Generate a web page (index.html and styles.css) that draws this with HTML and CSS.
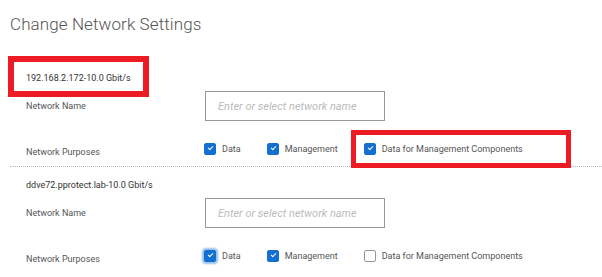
FILE: index.html
```html
<!DOCTYPE html>
<html>
<head>
<meta charset="utf-8">
<link rel="stylesheet" href="styles.css">
</head>
<body>
<div class="page">
  <h1 class="title">Change Network Settings</h1>

  <section class="net">
    <div class="net-head"><span class="net-id marked">192.168.2.172-10.0 Gbit/s</span></div>
    <div class="row row-name">
      <span class="label">Network Name</span>
      <input class="field" type="text" placeholder="Enter or select network name">
    </div>
    <div class="row row-purpose">
      <span class="label">Network Purposes</span>
      <div class="checks">
        <span class="check"><span class="box on"></span>Data</span>
        <span class="check"><span class="box on"></span>Management</span>
        <span class="check marked-item"><span class="box on"></span>Data for Management Components</span>
      </div>
    </div>
  </section>

  <div class="sep"></div>

  <section class="net">
    <div class="net-head"><span class="net-id">ddve72.pprotect.lab-10.0 Gbit/s</span></div>
    <div class="row row-name">
      <span class="label">Network Name</span>
      <input class="field" type="text" placeholder="Enter or select network name">
    </div>
    <div class="row row-purpose">
      <span class="label">Network Purposes</span>
      <div class="checks">
        <span class="check"><span class="box on focus"></span>Data</span>
        <span class="check"><span class="box on"></span>Management</span>
        <span class="check"><span class="box"></span>Data for Management Components</span>
      </div>
    </div>
  </section>
</div>
</body>
</html>
```

FILE: styles.css
```css
* { box-sizing: border-box; }
html, body { margin: 0; padding: 0; background: #fff; }
body { font-family: Roboto, "Liberation Sans", sans-serif; color: #444; }

.page { padding-top: 10px; }

.title {
  margin: 0 0 0 10px;
  font-size: 17px;
  font-weight: 300;
  color: #555;
  line-height: 28px;
  letter-spacing: 0.1px;
}

.net { padding-left: 26px; }

.net-head { height: 14px; line-height: 14px; }
.page > .net:first-of-type .net-head { margin-top: 31px; }
.sep + .net .net-head { margin-top: 9px; }

.net-id {
  position: relative;
  display: inline-block;
  font-size: 9px;
  color: #333;
}
.marked::after {
  content: "";
  position: absolute;
  left: -18px;
  right: -18px;
  top: -15px;
  bottom: -12px;
  border: 6px solid #ed1c24;
}

.row {
  display: grid;
  grid-template-columns: 178px auto;
  align-items: center;
}
.row-name { margin-top: 8px; height: 30px; }
.row-purpose { margin-top: 18px; height: 20px; }

.label { font-size: 9px; color: #555; }
.row-purpose .label { padding-top: 5px; }

.field {
  width: 180px;
  height: 30px;
  margin: 0 0 0 1px;
  border: 1px solid #999;
  border-radius: 0;
  padding: 0 0 0 12px;
  font-family: Roboto, "Liberation Sans", sans-serif;
  font-size: 11px;
  outline: none;
}
.field::placeholder { color: #bbb; font-style: italic; }

.checks { display: flex; align-items: center; gap: 26px; }
.check {
  position: relative;
  display: inline-flex;
  align-items: center;
  gap: 6px;
  font-size: 9px;
  color: #555;
  line-height: 14px;
}
.box {
  width: 12px;
  height: 12px;
  border: 1px solid #999;
  border-radius: 2px;
  background: #fff;
  position: relative;
}
.box.on { background: #1470d0; border-color: #1470d0; }
.box.on::after {
  content: "";
  position: absolute;
  left: 3px;
  top: 2px;
  width: 4px;
  height: 2px;
  border-left: 1.2px solid #fff;
  border-bottom: 1.2px solid #fff;
  transform: rotate(-45deg);
  transform-origin: center;
}
.box.focus { box-shadow: 0 0 2px 2px rgba(20, 112, 208, 0.45); }

.marked-item::after {
  content: "";
  position: absolute;
  left: -13px;
  right: -48px;
  top: -12px;
  bottom: -12px;
  border: 5px solid #ed1c24;
}

.sep {
  margin: 7px 0 0 10px;
  border-top: 1px dotted #bbb;
}
```
